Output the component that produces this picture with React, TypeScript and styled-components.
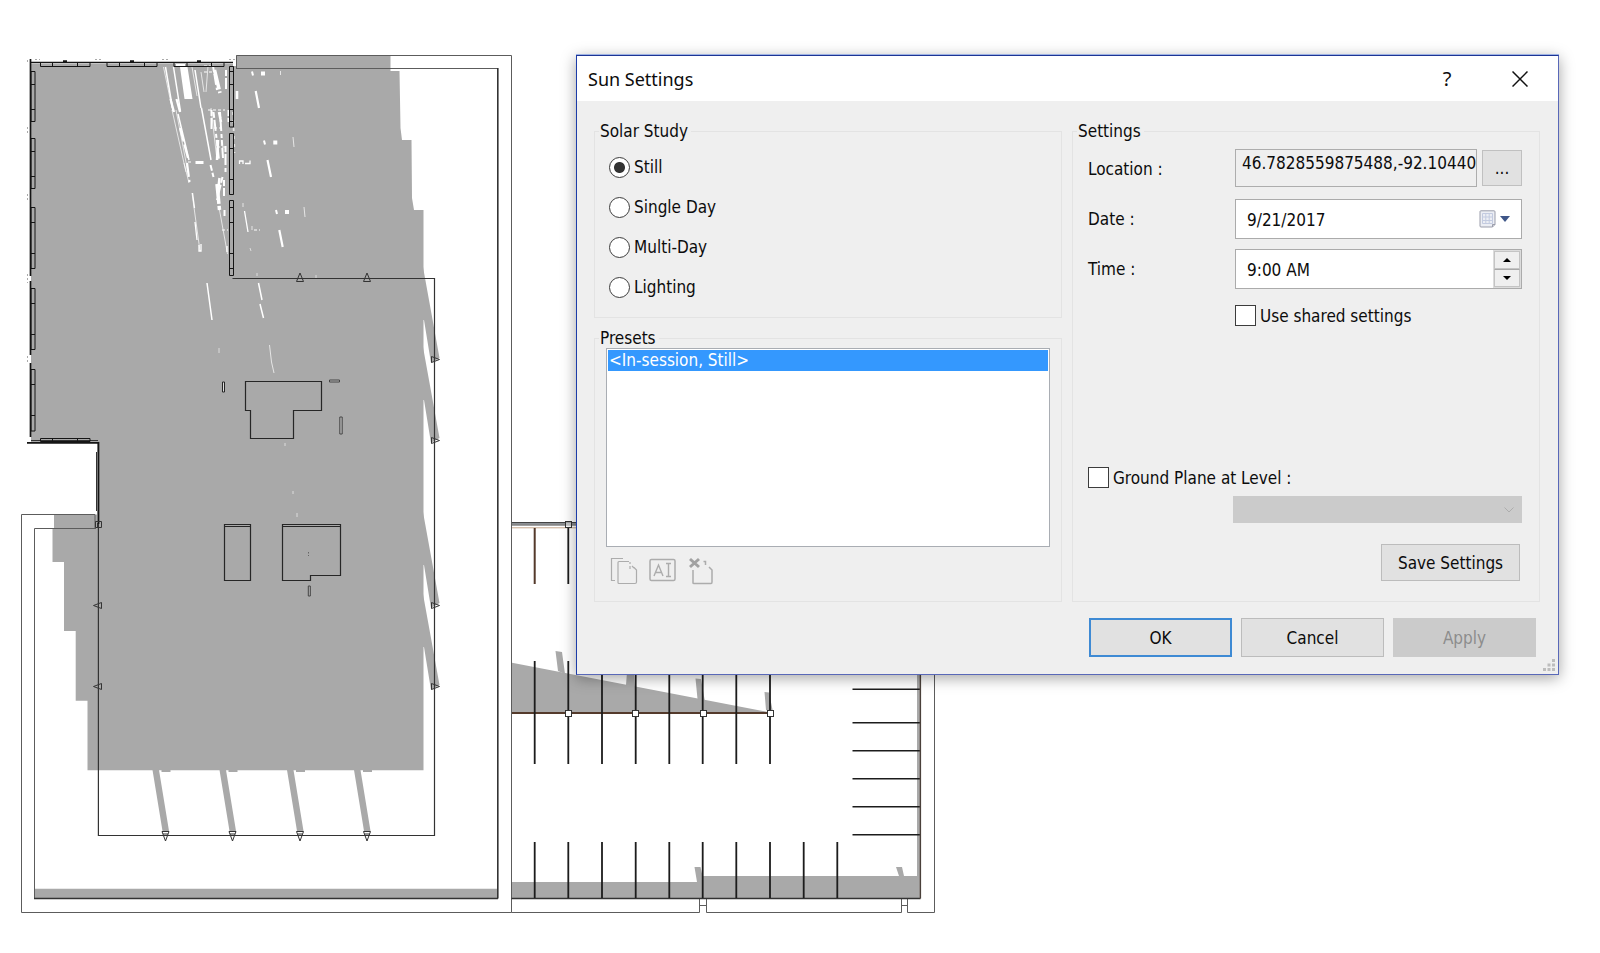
import React, { useState } from 'react';
import styled, { createGlobalStyle } from 'styled-components';

const GlobalStyle = createGlobalStyle`
  *, *::before, *::after { box-sizing: border-box; }
  body { margin: 0; background: #fff; }
  body, button, input, select {
    font-family: 'DejaVu Sans Condensed', Tahoma, 'DejaVu Sans', sans-serif;
    font-size: 17px;
    line-height: 20px;
    color: #0c0c0c;
  }
`;

const Desktop = styled.main`
  position: relative;
  min-height: 100vh;
  padding: 55px 41px 24px 36%;
  overflow: hidden;
`;

const PlanView = styled.svg`
  position: absolute;
  top: 0;
  left: 0;
  width: 100%;
  height: auto;
`;

const Dialog = styled.section`
  position: relative;
  background: #efefef;
  border: 1px solid #5968b8;
  border-left-color: #1c3ca8;
  border-top-color: #1c3494;
  box-shadow: 0 -1px 0 #9db2e4, 0 3px 14px rgba(0, 0, 0, 0.36);
`;

const TitleBar = styled.header`
  display: flex;
  align-items: center;
  height: 45px;
  padding: 0 15px 0 11px;
  background: #fff;
`;

const Title = styled.h1`
  flex: 1;
  margin: 0;
  font: 400 18px/24px 'Noto Sans', 'Open Sans', sans-serif;
`;

const CaptionButton = styled.button`
  display: grid;
  place-items: center;
  width: 46px;
  height: 44px;
  padding: 0;
  border: 0;
  background: none;
  font: 400 20px/24px 'Noto Sans', sans-serif;
  & + & { margin-left: 27px; }
`;

const Columns = styled.div`
  display: grid;
  grid-template-columns: minmax(0, 1fr) minmax(0, 1fr);
  gap: 10px;
  padding: 20px 18px 0 17px;
`;

const Column = styled.div`
  display: flex;
  flex-direction: column;
  gap: 10px;
`;

const Group = styled.fieldset`
  min-width: 0;
  margin: 0;
  padding: 0 4px;
  border: 1px solid #e3e3e3;
`;

const Legend = styled.legend`
  padding: 0 3px 0 1px;
`;

const Choices = styled.div`
  padding: 6px 10px 10px;
`;

const Choice = styled.label`
  display: flex;
  align-items: center;
  gap: 4px;
  height: 40px;
`;

const Radio = styled.input.attrs({ type: 'radio' })`
  appearance: none;
  width: 21px;
  height: 21px;
  margin: 0;
  border: 1px solid #3c3c3c;
  border-radius: 50%;
  background: #fff;
  &:checked { background: radial-gradient(circle, #333 5px, #fff 6px); }
`;

const Presets = styled.div`
  padding: 0 7px 16px;
`;

const PresetList = styled.ul`
  height: 199px;
  margin: 0;
  padding: 1px;
  list-style: none;
  border: 1px solid #a9adb3;
  background: #fff;
`;

const PresetItem = styled.li`
  height: 21px;
  padding-left: 1px;
  line-height: 20px;
  background: #3498fe;
  color: #fff;
`;

const PresetTools = styled.div`
  display: flex;
  gap: 11px;
  padding: 10px 0 0 4px;
`;

const ToolButton = styled.button`
  display: block;
  width: 28px;
  height: 28px;
  padding: 0;
  border: 0;
  background: none;
`;

const ToolIcon = styled.svg`
  display: block;
  fill: none;
  stroke: #acacac;
  stroke-width: 1.2;
`;

const SettingsBody = styled.div`
  padding: 8px 13px 20px 11px;
`;

const FieldGrid = styled.div`
  display: grid;
  grid-template-columns: 147px minmax(0, 1fr);
  align-items: center;
  row-gap: 10px;
`;

const LocationRow = styled.div`
  display: flex;
  align-items: center;
  gap: 5px;
  height: 40px;
  padding-bottom: 2px;
`;

const LocationInput = styled.input`
  flex: 1;
  min-width: 0;
  height: 38px;
  padding: 0 0 10px 6px;
  border: 1px solid #adadad;
  border-radius: 0;
  background: #efefef;
`;

const BrowseButton = styled.button`
  width: 40px;
  height: 36px;
  padding: 0;
  border: 1px solid #c0c0c0;
  background: #e1e1e1;
`;

const Field = styled.div`
  display: flex;
  align-items: center;
  height: 40px;
  border: 1px solid #ababab;
  background: #fff;
`;

const FieldInput = styled.input`
  flex: 1;
  min-width: 0;
  height: 38px;
  padding: 1px 0 0 11px;
  border: 0;
  background: transparent;
`;

const CalendarButton = styled.button`
  display: flex;
  align-items: center;
  gap: 4px;
  height: 36px;
  padding: 0 11px 0 0;
  border: 0;
  background: none;
`;

const Spinner = styled.div`
  display: flex;
  flex-direction: column;
  width: 28px;
  height: 38px;
  padding: 1px;
  background: #dcdcdc;
`;

const SpinButton = styled.button`
  flex: 1;
  display: grid;
  place-items: center;
  padding: 0;
  border: 1px solid #c4c4c4;
  background: #efefef;
  & + & { border-top-color: #a8a8a8; }
`;

const CheckLabel = styled.label<{ $indent?: boolean }>`
  display: flex;
  align-items: center;
  gap: 4px;
  height: 21px;
  margin-left: ${(p) => (p.$indent ? '147px' : '0')};
`;

const CheckBox = styled.input.attrs({ type: 'checkbox' })`
  appearance: none;
  width: 21px;
  height: 21px;
  margin: 0;
  border: 1px solid #3c3c3c;
  background: #fff;
  &:checked { box-shadow: inset 0 0 0 4px #fff; background: #333; }
`;

const SharedRow = styled.div`
  padding: 16px 0 141px;
`;

const LevelBox = styled.div`
  display: grid;
  align-items: center;
  margin: 8px 0 21px 145px;
  > * { grid-area: 1 / 1; }
  > svg { justify-self: end; margin-right: 8px; }
`;

const LevelSelect = styled.select`
  appearance: none;
  width: 100%;
  height: 27px;
  border: 0;
  border-radius: 0;
  background: #cbcbcb;
  opacity: 1;
`;

const Actions = styled.div`
  display: flex;
  justify-content: flex-end;
  padding-right: 2px;
`;

const PushButton = styled.button<{ $width: number; $primary?: boolean }>`
  width: ${(p) => p.$width}px;
  height: 39px;
  padding: 0;
  border: ${(p) => (p.$primary ? '2px solid #3e8ad4' : '1px solid #bcbcbc')};
  background: #e1e1e1;
  &:disabled { border-color: #cbcbcb; background: #cbcbcb; color: #8d8d8d; }
  ${Actions} & { height: 37px; }
`;

const Footer = styled.footer`
  display: flex;
  justify-content: flex-end;
  gap: 9px;
  padding: 16px 22px 17px;
`;

const Grip = styled.svg`
  position: absolute;
  right: 3px;
  bottom: 3px;
  fill: #bdbdbd;
`;

const GREY = '#a9a9a9';
const INK = '#333';

const COLUMN_XS = [165.5, 232.5, 300, 367];
const SLANT_ENDS = [358, 438, 603, 685];
const STALL_XS = [534.7, 568.3, 602, 635.7, 669.3, 702.7, 736.3, 770];
const SIDE_STALL_YS = [689.3, 722.7, 750.7, 778.7, 806.7, 834.7];

// Each wall run is its start, its inner joints and its end.
const WEST_RUNS = [
  [71.5, 84.5, 109.5, 121.5],
  [138.5, 151.5, 176.5, 188.5],
  [207.5, 222.5, 253.5, 268.5],
  [288.5, 303.5, 334.5, 349.5],
  [369.5, 384.5, 415.5, 431],
];
const MID_RUNS = [
  [66.5, 71.5, 84.5, 109.5, 121.5, 127],
  [133.5, 148.5, 179.5, 194.5],
  [200.5, 207.5, 222.5, 253.5, 268.5, 275.5],
];
const NORTH_RUNS = [
  [40.5, 52.5, 77.5, 90],
  [107, 119.5, 144.5, 157],
  [174, 187, 211.5, 224],
];

const wallY = (x: number, w: number, r: number[]) =>
  `M${x} ${r[0]}H${x + w}V${r[r.length - 1]}H${x}Z` + r.slice(1, -1).map((y) => `M${x} ${y}h${w}`).join('');
const wallX = (y: number, h: number, r: number[]) =>
  `M${r[0]} ${y}V${y + h}H${r[r.length - 1]}V${y}Z` + r.slice(1, -1).map((x) => `M${x} ${y}v${h}`).join('');

function Shadows() {
  return (
    <g fill={GREY}>
      <path d="M236 55H390.500V71H399.500L400.500 128L402 140H411.500L412 198L414 210H423.500V770.300H87.500V700.700H75.700V631H64V562H52.500V528H54V514.500H97V443H31V64H233V69H236Z" />
      <path d="M232 66h5v212h-5Z" />
      {SLANT_ENDS.map((e) => (
        <path key={e} d={`M423 ${e - 91}L439.500 ${e}L431 ${e + 5}L424 ${e - 38}H423Z`} />
      ))}
      {COLUMN_XS.map((x) => (
        <path key={x} d={`M${x - 13} 770h6.500L${x + 3.5} 831h-6.500ZM${x - 4} 770h9v2h-9Z`} />
      ))}
      <path d="M34.500 888.700H497.500V898.500H34.500ZM512 662.700L768 712H512Z" />
      <path d="M555.500 651L562 652L565 674L558 671ZM627 672H634L635 688L626 685ZM695.500 678.500L701 679L705 702L697.500 699ZM764.500 692L769 692.500L773 712L766 710Z" />
      <path d="M512 882H697L694.500 867H700.500L702.500 876H899L896 867H902L904 876H917.500V898.500H512Z" />
      <path d="M917 674h2.500V898h-2.500Z" />
    </g>
  );
}

function LightStreaks() {
  return (
    <g fill="none" stroke="#fff">
      <path fill="#fff" stroke="none" d="M176 64h9v2h-9ZM180 67H187.500L192.500 99H184.500Z" />
      <path strokeWidth="1.500" d="M165.500 67L173 111M173.500 67L180.500 111.500M178 114L189 160M195 70L201 108M201.500 108L211 160M207 283L212 320M258.500 283L262 300M260 304L263.500 318" />
      <path strokeWidth="2.200" d="M170.500 99L174 112M176.500 99L180 112M180 128L188.500 160M187 163L189.500 182" strokeDasharray="14 3" />
      <path strokeWidth="0.700" d="M163.500 67L172 108M172 110L186 172M176 110L187.500 170M192 67L197 96M201 72L204 92M208 66L206 92M184 163L189 183M192 193L200 251M211 108L217 160M219.500 210L227.500 254M269.500 345L271.500 362L274 373M293 137L294 147M304 207L305 217M280.500 71v4M243 203v4M252 230v-4" />
      <path strokeWidth="3.500" strokeDasharray="20 2 8 3" d="M214.500 70L220 93M217 184L219.500 210" />
      <path strokeWidth="2.500" d="M219 112L221 122M218 140L217 160M219.500 178L218 192" />
      <path strokeWidth="2" strokeDasharray="6 2 11 3 4 2" d="M213 66L217 90M220 112L223 158M213.500 112L219 160M211.500 110V130M222.500 177L217 200M224 180V196M226 70V92M225.500 146V174M228.500 110V122M210.500 165L213.500 177M224.500 210v8" />
      <path strokeWidth="1" strokeDasharray="3 2" d="M204 72H216M208 110H225M214 128H224M217 147H226M222 230H228M254 230H260M204 66H214M188 162H193" />
      <path strokeWidth="3" strokeDasharray="8 3 2 1" d="M195.500 162.500H206" />
      <path strokeWidth="1.300" d="M244.500 211L248 232M192.500 193L194.500 208M195 222L197 240M199 245V251H201V244M227 246V252M239.500 164V161H243V164M245 163.500H250V160.500" />
      <path strokeWidth="1.800" d="M233 112L234.500 153" strokeDasharray="3 5" opacity="0.700" />
      <path strokeWidth="2.600" d="M237 91V99" />
      <path strokeWidth="2.200" d="M255.700 91L259 108M267.500 160L271 177M279.300 230L282.700 247" />
      <path strokeWidth="2" d="M252 71.500L253 75.500M264 140.500L265 144.500M276 210L277 214" />
      <path strokeWidth="4" d="M263 71.500v4M275.300 140.500v4M287 210v4" />
      <path strokeWidth="1" opacity="0.600" d="M219 348v5M293 491v3M297 513v4M285 443v3M250 248l1 3M257 273v3M316 275v3" />
    </g>
  );
}

function Outlines() {
  return (
    <g fill="none" stroke={INK}>
      <g stroke="#5c5c5c">
        <path d="M236.500 69V55.500H511.500V912.500H21.500V514.500H95V528.500" />
        <path d="M236 68.500H497.500" />
        <path d="M96 528.500H34.500V898.500" />
        <path d="M511.500 912.500H699.500V898.500M706.500 898.500V912.500H901.500V898.500M907.500 898.500V912.500H934.500V670M699.500 905.500H706.500M901.500 905.500H907.500" />
      </g>
      <path strokeWidth="1.600" d="M497.800 68V898.500M34 898.500H498M511.500 898.500H920.500" />

      <path strokeWidth="1.200" d="M98.400 524V835.500H434.500V278.500H232.500" />
      <path stroke="#151515" strokeWidth="1.700" d="M30.500 59V276M30.500 281V355M30.500 363V437M30 62.500H233M27 442.800H98.500V524" />
      <path strokeWidth="1" d="M96.500 452V511M31 440.500H98" />
      <path stroke="#151515" d={WEST_RUNS.map((r) => wallY(31, 4, r)).join('')} />
      <path stroke="#151515" d={MID_RUNS.map((r) => wallY(229.5, 4, r)).join('')} />
      <path stroke="#151515" d={NORTH_RUNS.map((r) => wallX(62.5, 4, r)).join('') + wallX(438.5, 3, NORTH_RUNS[0])} />
      <path stroke="#151515" strokeWidth="2" d="M63 61.200h4M130 61.200h4M197 61.200h4" />
      <path stroke="#aaa" strokeDasharray="2 2" d="M35 59.500H40M95 59.500H102M162 59.500H170M229 59.500H236M27.500 60V63M27.500 127V134M27.500 194V201M27.500 274V283M27.500 356V363" />

      {COLUMN_XS.map((x) => (
        <path key={x} d={`M${x - 3.5} 831.500h7L${x} 841ZM${x - 2.500} 834h5`} />
      ))}
      {[300, 367].map((x) => (
        <path key={x} d={`M${x - 3.5} 281.500h7L${x} 273Z`} />
      ))}
      {[359.5, 440.5, 605.500, 686.5].map((y) => (
        <path key={y} d={`M431.500 ${y - 3}v6l8 -3Z`} />
      ))}
      {[605.5, 686.5].map((y) => (
        <path key={y} d={`M101.500 ${y - 3}v6l-8 -3Z`} />
      ))}
      <path d="M95.500 521.500h6v6h-6ZM97.500 523v4" />

      <g stroke="#262626" strokeWidth="1.200">
        <path d="M245.500 381.500H321.500V410.500H293.500V438.500H250.500V410.500H245.500Z" />
        <path d="M224.500 524.500H250.500V580.500H224.500ZM224.500 526.500H250.500" />
        <path d="M282.500 524.500H340.500V575.500H310.500V580.500H282.500ZM282.500 526.500H340.500" />
      </g>
      <path stroke="#262626" fill="#ddd" d="M222.500 382h2v10h-2Z" />
      <path stroke="#444" fill="#b5b5b5" d="M339.800 417h2.400v17h-2.400ZM308.300 586h2v10h-2ZM329.500 380h10v2h-10Z" />
      <path stroke="#666" d="M308.500 552v1.500M308.500 555v1" />

      <path stroke="#8b8f93" strokeWidth="2" d="M512 523.500H578" />
      <path stroke="#444" d="M512 522.500H578M512 525H578" />
      <path stroke="#c6a78c" d="M512 527.800H578" />
      <path stroke="#543a2b" strokeWidth="2" d="M512 713H770M534.700 528V584" />
      <path stroke="#1c1c1c" strokeWidth="1.800" d={STALL_XS.map((x) => `M${x} 661V764M${x} 842V898`).join('') + 'M803.700 842V898M837.300 842V898M568.300 528V584'} />
      <path stroke="#1c1c1c" strokeWidth="1.600" d={SIDE_STALL_YS.map((y) => `M852.500 ${y}H920.500`).join('')} />
      <path stroke="#4a403a" strokeWidth="1.600" d="M920.300 670V898.500" />
      <g fill="#fff">
        {[568.5, 635.5, 703.5, 770.5].map((x) => (
          <rect key={x} x={x - 3} y="710.500" width="6" height="6" />
        ))}
        <rect x="565.500" y="521.500" width="6" height="6" fillOpacity="0.500" />
      </g>
    </g>
  );
}

const STUDIES = ['Still', 'Single Day', 'Multi-Day', 'Lighting'];

export default function App() {
  const [study, setStudy] = useState('Still');
  return (
    <>
      <GlobalStyle />
      <Desktop>
        <PlanView viewBox="0 0 1600 953" aria-hidden="true">
          <Shadows />
          <LightStreaks />
          <Outlines />
        </PlanView>

        <Dialog role="dialog" aria-labelledby="dialog-title">
          <TitleBar>
            <Title id="dialog-title">Sun Settings</Title>
            <CaptionButton type="button" aria-label="Help">?</CaptionButton>
            <CaptionButton type="button" aria-label="Close">
              <svg width="16" height="16" viewBox="0 0 16 16" stroke="#111" strokeWidth="1.500">
                <path d="M0.500 0.500L15.500 15.500M15.500 0.500L0.500 15.500" />
              </svg>
            </CaptionButton>
          </TitleBar>

          <Columns>
            <Column>
              <Group>
                <Legend>Solar Study</Legend>
                <Choices>
                  {STUDIES.map((s) => (
                    <Choice key={s}>
                      <Radio name="study" checked={study === s} onChange={() => setStudy(s)} />
                      {s}
                    </Choice>
                  ))}
                </Choices>
              </Group>
              <Group>
                <Legend>Presets</Legend>
                <Presets>
                  <PresetList role="listbox" aria-label="Presets">
                    <PresetItem role="option" aria-selected="true">&lt;In-session, Still&gt;</PresetItem>
                  </PresetList>
                  <PresetTools>
                    <ToolButton type="button" aria-label="Duplicate" disabled>
                      <ToolIcon width="28" height="28" viewBox="0 0 28 28">
                        <path d="M13 1.500H1.500V23.500H5" />
                        <path d="M19 4.500H9Q8 4.500 8 5.500V25.500Q8 26.500 9 26.500H25Q26.500 26.500 26.500 25V13L24 10.500M20 5v2M20 9v3M22 9l2 2" />
                      </ToolIcon>
                    </ToolButton>
                    <ToolButton type="button" aria-label="Rename" disabled>
                      <ToolIcon width="28" height="28" viewBox="0 0 28 28">
                        <rect x="1" y="2.500" width="25" height="21" rx="1.500" strokeWidth="1.500" />
                        <path d="M5 19L9.500 8L14 19M6.500 15.500H12.500M17 6.500H22M17 19.500H22M19.500 6.500V19.500" strokeWidth="1.400" />
                      </ToolIcon>
                    </ToolButton>
                    <ToolButton type="button" aria-label="Delete" disabled>
                      <ToolIcon width="28" height="28" viewBox="0 0 28 28">
                        <path d="M2 2L11 10M11 2L2 10" stroke="#a2a2a2" strokeWidth="3" />
                        <path d="M5 13V26Q5 26.500 6 26.500H23Q24 26.500 24 25V13L21 10M15.500 4.500H17.500V8" strokeWidth="1.500" />
                      </ToolIcon>
                    </ToolButton>
                  </PresetTools>
                </Presets>
              </Group>
            </Column>

            <Group>
              <Legend>Settings</Legend>
              <SettingsBody>
                <FieldGrid>
                  <label htmlFor="location">Location :</label>
                  <LocationRow>
                    <LocationInput id="location" readOnly value="46.7828559875488,-92.10440" />
                    <BrowseButton type="button" aria-label="Browse location">...</BrowseButton>
                  </LocationRow>
                  <label htmlFor="date">Date :</label>
                  <Field>
                    <FieldInput id="date" defaultValue="9/21/2017" />
                    <CalendarButton type="button" aria-label="Open calendar">
                      <svg width="17" height="18" viewBox="0 0 17 18" fill="none">
                        <path d="M1 1.500Q1 0.800 2 0.800H15Q16 0.800 16 1.800V14.500L13.500 17H2Q1 17 1 16Z" fill="#eceef4" stroke="#9a9dab" />
                        <path d="M3.500 3.500H13.500V13.500H3.500ZM3.500 7H13.500M3.500 10.500H13.500M6.800 3.500V13.500M10.200 3.500V13.500" stroke="#c3cbe0" />
                        <path d="M13.500 17V14.500H16" fill="#c9cad2" stroke="#9a9dab" />
                      </svg>
                      <svg width="10" height="6" viewBox="0 0 10 6" fill="#3f5688">
                        <path d="M0 0H10L5 6Z" />
                      </svg>
                    </CalendarButton>
                  </Field>
                  <label htmlFor="time">Time :</label>
                  <Field>
                    <FieldInput id="time" defaultValue="9:00 AM" />
                    <Spinner>
                      <SpinButton type="button" aria-label="Later">
                        <svg width="8" height="4" viewBox="0 0 8 4"><path d="M0 4L4 0L8 4Z" /></svg>
                      </SpinButton>
                      <SpinButton type="button" aria-label="Earlier">
                        <svg width="8" height="4" viewBox="0 0 8 4"><path d="M0 0L4 4L8 0Z" /></svg>
                      </SpinButton>
                    </Spinner>
                  </Field>
                </FieldGrid>
                <SharedRow>
                  <CheckLabel $indent>
                    <CheckBox />
                    Use shared settings
                  </CheckLabel>
                </SharedRow>
                <CheckLabel>
                  <CheckBox />
                  Ground Plane at Level :
                </CheckLabel>
                <LevelBox>
                  <LevelSelect disabled aria-label="Ground plane level" />
                  <svg width="10" height="6" viewBox="0 0 10 6" fill="none" stroke="#adadad">
                    <path d="M0.500 0.500L5 5L9.500 0.500" />
                  </svg>
                </LevelBox>
                <Actions>
                  <PushButton type="button" $width={139}>Save Settings</PushButton>
                </Actions>
              </SettingsBody>
            </Group>
          </Columns>

          <Footer>
            <PushButton type="button" $width={143} $primary>OK</PushButton>
            <PushButton type="button" $width={143}>Cancel</PushButton>
            <PushButton type="button" $width={143} disabled>Apply</PushButton>
          </Footer>
          <Grip width="12" height="12" viewBox="0 0 12 12" aria-hidden="true">
            <path d="M9 0h3v3h-3ZM4.500 4.500h3v3h-3ZM9 4.500h3v3h-3ZM0 9h3v3h-3ZM4.500 9h3v3h-3ZM9 9h3v3h-3Z" />
          </Grip>
        </Dialog>
      </Desktop>
    </>
  );
}
